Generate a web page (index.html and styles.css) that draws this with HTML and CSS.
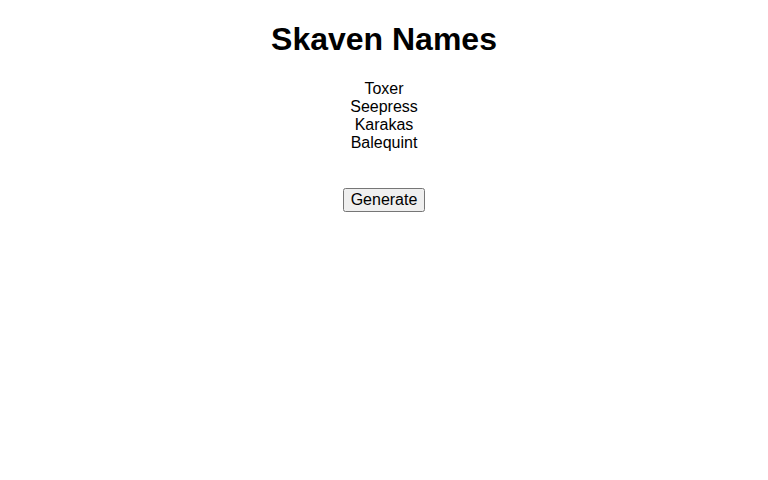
FILE: index.html
```html
<!DOCTYPE html>
<html lang="en">
<head>
    <meta charset="UTF-8">
    <title>Skaven Names</title>
    <link rel="stylesheet" href="styles.css">
</head>
<body>
<h1 class="title">Skaven Names</h1>

<div id="names" class="names">
    <div class="name">Toxer</div>
    <div class="name">Seepress</div>
    <div class="name">Karakas</div>
    <div class="name">Balequint</div>
</div>

<div class="actions">
    <button class="generate" onclick="generate()">Generate</button>
</div>

<script>
    const starts = ["To", "See", "Kara", "Bale", "Skri", "Queek", "Thanq", "Ikit", "Snik", "Vermi"];
    const ends = ["xer", "press", "kas", "quint", "tch", "rik", "ol", "claw", "skab", "nak"];

    const pick = list => list[Math.floor(Math.random() * list.length)];

    const generate = () => {
        names.innerHTML = "";
        for (let i = 0; i < 4; i++) {
            names.innerHTML += '<div class="name">' + pick(starts) + pick(ends) + '</div>';
        }
    };
</script>
</body>
</html>
```

FILE: styles.css
```css
body {
    margin: 0;
    font-family: "Liberation Sans", Arial, sans-serif;
    text-align: center;
    color: #000;
}

.title {
    font-size: 32px;
    margin: 21.44px 0;
}

.names {
    font-size: 16px;
}

.actions {
    margin-top: 36.4px;
}

.generate {
    font-family: "Liberation Sans", Arial, sans-serif;
    font-size: 16px;
}
```
